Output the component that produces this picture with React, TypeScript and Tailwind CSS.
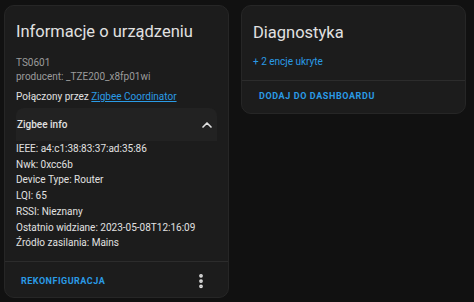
import { ChevronUp, MoreVertical } from 'lucide-react';

export default function App() {
  const info = [
    'IEEE: a4:c1:38:83:37:ad:35:86',
    'Nwk: 0xcc6b',
    'Device Type: Router',
    'LQI: 65',
    'RSSI: Nieznany',
    'Ostatnio widziane: 2023-05-08T12:16:09',
    'Źródło zasilania: Mains',
  ];

  return (
    <div className="w-[474px] h-[302px] overflow-hidden bg-[#111111] font-['Roboto',sans-serif] flex gap-[12px] pl-[4px] pt-[5px]">
      {/* Device info */}
      <div className="w-[225px] h-[293px] shrink-0 bg-[#1c1c1c] border border-[#262626] rounded-[10px] flex flex-col">
        <div className="px-[11px] pt-[15px]">
          <h1 className="text-[16.5px] leading-[22px] text-[#e1e1e1]">Informacje o urządzeniu</h1>
          <div className="mt-[13px] text-[10px] leading-[14px] text-[#9b9b9b]">
            <div>TS0601</div>
            <div>producent: _TZE200_x8fp01wi</div>
          </div>
          <div className="mt-[6px] text-[10px] leading-[14px] text-[#e1e1e1]">
            Połączony przez{' '}
            <span className="text-[#2a9be6] underline">Zigbee Coordinator</span>
          </div>
          <div className="mt-[4px] h-[33px] bg-[#222222] rounded-t-[8px] flex items-center justify-between pl-[1px] pr-[2px]">
            <span className="text-[10px] font-medium text-[#e1e1e1]">Zigbee info</span>
            <ChevronUp size={16} strokeWidth={2.5} className="text-[#e1e1e1]" />
          </div>
          <div className="text-[10px] leading-[15.7px] text-[#e1e1e1]">
            {info.map((line) => (
              <div key={line}>{line}</div>
            ))}
          </div>
        </div>
        <div className="mt-[10px] border-t border-[#2c2c2c] flex-1 flex items-center justify-between pl-[16px] pr-[18px] pt-[4px]">
          <span className="text-[9px] font-bold tracking-[0.5px] text-[#2a9be6]">REKONFIGURACJA</span>
          <MoreVertical size={18} strokeWidth={3} className="text-[#e1e1e1]" />
        </div>
      </div>

      {/* Diagnostics */}
      <div className="w-[225px] h-[109px] shrink-0 bg-[#1c1c1c] border border-[#262626] rounded-[10px] flex flex-col">
        <div className="px-[11px] pt-[16px]">
          <h2 className="text-[16.5px] leading-[22px] text-[#e1e1e1]">Diagnostyka</h2>
          <div className="mt-[11px] text-[10px] leading-[14px] text-[#2a9be6]">+ 2 encje ukryte</div>
        </div>
        <div className="mt-[11px] border-t border-[#2c2c2c] flex-1 flex items-center pl-[17px]">
          <span className="text-[9px] font-bold tracking-[0.6px] text-[#2a9be6]">DODAJ DO DASHBOARDU</span>
        </div>
      </div>
    </div>
  );
}
